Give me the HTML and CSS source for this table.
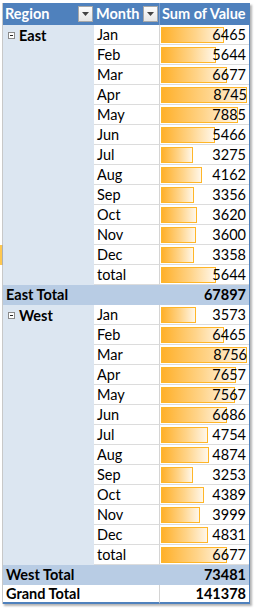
FILE: index.html
```html
<!DOCTYPE html>
<html>
<head>
<meta charset="utf-8">
<link rel="stylesheet" href="styles.css">
</head>
<body>
<div class="sheet">
  <div class="pivot">
    <div class="hd hd-region"><span>Region</span><span class="dd"><svg width="7" height="4" viewBox="0 0 7 4"><path d="M0 0H7L3.5 4Z" fill="#444"/></svg></span></div>
    <div class="hd hd-month"><span>Month</span><span class="dd"><svg width="7" height="4" viewBox="0 0 7 4"><path d="M0 0H7L3.5 4Z" fill="#444"/></svg></span></div>
    <div class="hd hd-val"><span>Sum of Value</span></div>

    <div class="region"><svg class="tog" width="7" height="7" viewBox="0 0 7 7"><rect x="0.5" y="0.5" width="6" height="6" fill="#fff" stroke="#8a8a8a"/><path d="M2 3.5H5" stroke="#222"/></svg><span>East</span></div>
    <div class="m">Jan</div><div class="v"><i class="bar" style="width:63px"></i><b>6465</b></div>
    <div class="m">Feb</div><div class="v"><i class="bar" style="width:55px"></i><b>5644</b></div>
    <div class="m">Mar</div><div class="v"><i class="bar" style="width:66px"></i><b>6677</b></div>
    <div class="m">Apr</div><div class="v"><i class="bar" style="width:86px"></i><b>8745</b></div>
    <div class="m">May</div><div class="v"><i class="bar" style="width:77px"></i><b>7885</b></div>
    <div class="m">Jun</div><div class="v"><i class="bar" style="width:54px"></i><b>5466</b></div>
    <div class="m">Jul</div><div class="v"><i class="bar" style="width:32px"></i><b>3275</b></div>
    <div class="m">Aug</div><div class="v"><i class="bar" style="width:41px"></i><b>4162</b></div>
    <div class="m">Sep</div><div class="v"><i class="bar" style="width:33px"></i><b>3356</b></div>
    <div class="m">Oct</div><div class="v"><i class="bar" style="width:36px"></i><b>3620</b></div>
    <div class="m">Nov</div><div class="v"><i class="bar" style="width:35px"></i><b>3600</b></div>
    <div class="m">Dec</div><div class="v"><i class="bar" style="width:33px"></i><b>3358</b></div>
    <div class="m">total</div><div class="v"><i class="bar" style="width:55px"></i><b>5644</b></div>

    <div class="tot-label">East Total</div><div class="tot-val">67897</div>

    <div class="region"><svg class="tog" width="7" height="7" viewBox="0 0 7 7"><rect x="0.5" y="0.5" width="6" height="6" fill="#fff" stroke="#8a8a8a"/><path d="M2 3.5H5" stroke="#222"/></svg><span>West</span></div>
    <div class="m">Jan</div><div class="v"><i class="bar" style="width:35px"></i><b>3573</b></div>
    <div class="m">Feb</div><div class="v"><i class="bar" style="width:63px"></i><b>6465</b></div>
    <div class="m">Mar</div><div class="v"><i class="bar" style="width:86px"></i><b>8756</b></div>
    <div class="m">Apr</div><div class="v"><i class="bar" style="width:75px"></i><b>7657</b></div>
    <div class="m">May</div><div class="v"><i class="bar" style="width:74px"></i><b>7567</b></div>
    <div class="m">Jun</div><div class="v"><i class="bar" style="width:66px"></i><b>6686</b></div>
    <div class="m">Jul</div><div class="v"><i class="bar" style="width:47px"></i><b>4754</b></div>
    <div class="m">Aug</div><div class="v"><i class="bar" style="width:48px"></i><b>4874</b></div>
    <div class="m">Sep</div><div class="v"><i class="bar" style="width:32px"></i><b>3253</b></div>
    <div class="m">Oct</div><div class="v"><i class="bar" style="width:43px"></i><b>4389</b></div>
    <div class="m">Nov</div><div class="v"><i class="bar" style="width:39px"></i><b>3999</b></div>
    <div class="m">Dec</div><div class="v"><i class="bar" style="width:47px"></i><b>4831</b></div>
    <div class="m">total</div><div class="v"><i class="bar" style="width:66px"></i><b>6677</b></div>

    <div class="tot-label">West Total</div><div class="tot-val">73481</div>

    <div class="gt-label">Grand Total</div><div class="gt-val">141378</div>
  </div>
  <div class="stub"></div>
</div>
</body>
</html>
```
FILE: styles.css
```css
html, body {
  margin: 0;
  padding: 0;
  background: #fff;
}
body {
  font-family: Lato, "Liberation Sans", sans-serif;
  font-size: 14.5px;
  color: #000;
}
.sheet {
  position: relative;
  padding: 3px 0 0 2px;
  width: 252px;
  height: 612px;
}
.pivot {
  display: grid;
  grid-template-columns: 91px 65px 90px;
  grid-template-rows: 22px repeat(28, 20px) 19px;
  width: 246px;
  border-left: 1px solid #c8c8c8;
  border-right: 1px solid #4f81bd;
  box-shadow: 2px 2px 2px rgba(0, 0, 0, 0.3);
}
.hd {
  background: #4f81bd;
  color: #fff;
  font-weight: bold;
  display: flex;
  align-items: center;
  justify-content: space-between;
  padding: 0 1px 0 2px;
  box-sizing: border-box;
  line-height: 1;
}
.hd-val {
  border-left: 1px solid #7d9fcf;
}
.dd {
  width: 15px;
  height: 16px;
  box-sizing: border-box;
  border: 1px solid #a8a8a8;
  background: linear-gradient(#fdfdfd, #e6e6e6);
  display: flex;
  align-items: center;
  justify-content: center;
}
.region {
  grid-row: span 13;
  background: #dce6f1;
  font-weight: bold;
  display: flex;
  align-items: flex-start;
  gap: 4px;
  padding: 3px 0 0 5px;
  line-height: 16px;
}
.tog {
  margin-top: 4px;
}
.m {
  box-sizing: border-box;
  border-bottom: 1px solid #dcdcdc;
  padding-left: 3px;
  line-height: 19px;
  background: #fff;
}
.v {
  box-sizing: border-box;
  border-bottom: 1px solid #dcdcdc;
  border-left: 1px solid #d4d4d4;
  display: grid;
  padding: 2px 3px 0 1px;
  align-items: start;
}
.bar {
  grid-area: 1 / 1;
  justify-self: start;
  height: 16px;
  box-sizing: border-box;
  border: 1px solid #ffb628;
  background: linear-gradient(90deg, #ffb02a 0%, #ffd48a 55%, #fff7ea 100%);
}
.v b {
  grid-area: 1 / 1;
  justify-self: end;
  font-weight: normal;
  line-height: 16px;
  position: relative;
}
.tot-label {
  grid-column: span 2;
  background: #b8cce4;
  font-weight: bold;
  padding-left: 3px;
  line-height: 20px;
}
.tot-val {
  background: #b8cce4;
  font-weight: bold;
  text-align: right;
  padding-right: 3px;
  line-height: 20px;
}
.gt-label {
  grid-column: span 2;
  font-weight: bold;
  padding-left: 3px;
  line-height: 17px;
  border-bottom: 2px solid #4f81bd;
}
.gt-val {
  font-weight: bold;
  text-align: right;
  padding-right: 3px;
  line-height: 17px;
  border-bottom: 2px solid #4f81bd;
  border-left: 1px solid #d4d4d4;
}
.stub {
  position: absolute;
  left: 0;
  top: 245px;
  width: 2px;
  height: 20px;
  background: #ffc850;
  border-right: 1px solid #b0b0b0;
}
```
